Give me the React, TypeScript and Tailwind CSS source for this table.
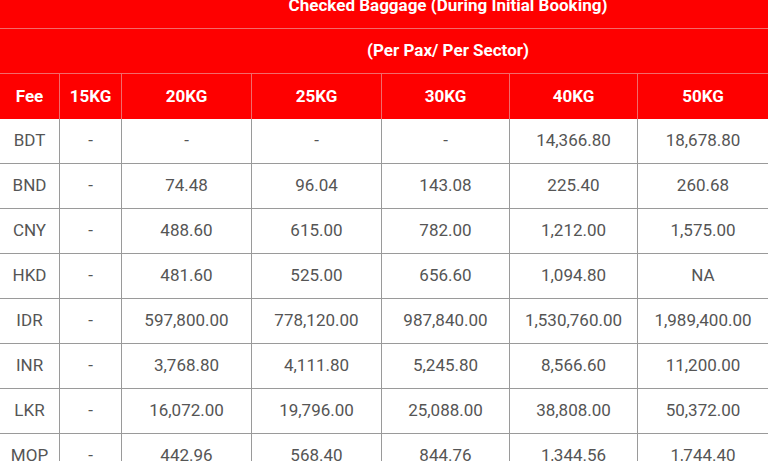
const headers = ["Fee", "15KG", "20KG", "25KG", "30KG", "40KG", "50KG"];

const rows: string[][] = [
  ["BDT", "-", "-", "-", "-", "14,366.80", "18,678.80"],
  ["BND", "-", "74.48", "96.04", "143.08", "225.40", "260.68"],
  ["CNY", "-", "488.60", "615.00", "782.00", "1,212.00", "1,575.00"],
  ["HKD", "-", "481.60", "525.00", "656.60", "1,094.80", "NA"],
  ["IDR", "-", "597,800.00", "778,120.00", "987,840.00", "1,530,760.00", "1,989,400.00"],
  ["INR", "-", "3,768.80", "4,111.80", "5,245.80", "8,566.60", "11,200.00"],
  ["LKR", "-", "16,072.00", "19,796.00", "25,088.00", "38,808.00", "50,372.00"],
  ["MOP", "-", "442.96", "568.40", "844.76", "1,344.56", "1,744.40"],
];

const cols = "grid grid-cols-[60px_62px_130px_130px_128px_128px_130px]";

export default function App() {
  return (
    <div className="h-[461px] w-[768px] overflow-hidden bg-white font-['Roboto','Liberation_Sans',sans-serif]">
      <div className="-mt-[16px]">
        <div className="flex h-[45px] items-center justify-center border-b border-[#f26a6a] bg-[#fe0000] pl-[128px] text-[17px] font-bold text-white">
          Checked Baggage (During Initial Booking)
        </div>
        <div className="flex h-[45px] items-center justify-center border-b border-[#f26a6a] bg-[#fe0000] pl-[128px] text-[17px] font-bold text-white">
          (Per Pax/ Per Sector)
        </div>

        {/* Column headers */}
        <div className={`${cols} h-[45px] bg-[#fe0000]`}>
          {headers.map((h, i) => (
            <div
              key={h}
              className={`flex items-center justify-center text-[17px] font-bold text-white ${
                i < headers.length - 1 ? "border-r border-[#f26a6a]" : ""
              }`}
            >
              {h}
            </div>
          ))}
        </div>

        {/* Fee rows */}
        {rows.map((row) => (
          <div key={row[0]} className={`${cols} h-[45px] border-b border-[#9a9a9a]`}>
            {row.map((cell, i) => (
              <div
                key={i}
                className={`flex items-center justify-center text-[17px] text-[#555555] ${
                  i < row.length - 1 ? "border-r border-[#9a9a9a]" : ""
                }`}
              >
                {cell}
              </div>
            ))}
          </div>
        ))}
      </div>
    </div>
  );
}
